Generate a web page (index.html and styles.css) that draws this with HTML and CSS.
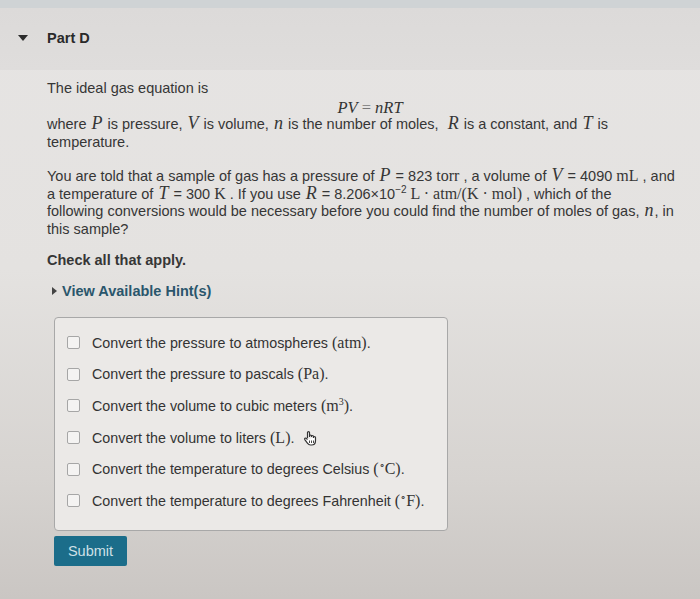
FILE: index.html
```html
<!DOCTYPE html>
<html>
<head>
<meta charset="utf-8">
<link rel="stylesheet" href="styles.css">
</head>
<body>
<div class="topstrip"></div>
<header class="part-head">
  <span class="caret"></span>
  <span class="part-title">Part D</span>
</header>
<main class="content">
  <p class="intro">The ideal gas equation is</p>
  <div class="equation"><i>PV</i> <span class="eq">=</span> <i>nRT</i></div>
  <p class="para">where <i class="m">P</i> is pressure, <i class="m">V</i> is volume, <i class="m">n</i> is the number of moles, &nbsp;<i class="m">R</i> is a constant, and <i class="m">T</i> is<br>temperature.</p>
  <p class="para second">You are told that a sample of gas has a pressure of <i class="m">P</i> = 823 <span class="u">torr</span> , a volume of <i class="m">V</i> = 4090 <span class="u">mL</span> , and<br>a temperature of <i class="m">T</i> = 300 <span class="u">K</span> . If you use <i class="m">R</i> = 8.206×10<sup>−2</sup> <span class="u">L · atm/(K · mol)</span> , which of the<br>following conversions would be necessary before you could find the number of moles of gas, <i class="m">n</i>, in<br>this sample?</p>
  <p class="check">Check all that apply.</p>
  <p class="hint"><span class="hint-caret"></span>View Available Hint(s)</p>
  <div class="options">
    <label class="opt"><span class="box"></span>Convert the pressure to atmospheres <span class="u">(atm)</span>.</label>
    <label class="opt"><span class="box"></span>Convert the pressure to pascals <span class="u">(Pa)</span>.</label>
    <label class="opt"><span class="box"></span>Convert the volume to cubic meters <span class="u">(m<sup>3</sup>)</span>.</label>
    <label class="opt"><span class="box"></span>Convert the volume to liters <span class="u">(L)</span>.
      <svg class="cursor" width="16" height="16" viewBox="0 0 16 16"><path d="M5.5 8V2.6a1 1 0 0 1 2 0V7m0-1a1 1 0 0 1 2 0v1m0-.5a1 1 0 0 1 2 0V8m0-.5a1 1 0 0 1 2 0v3.2c0 2.4-1.6 4.3-4 4.3H8.6c-1.4 0-2.4-.7-3.2-1.8L2.8 9.6a1 1 0 0 1 1.5-1.3L5.5 9.5" fill="#fff" stroke="#333" stroke-width="1.2" stroke-linejoin="round"/><path d="M7.5 10.5v2.5M9.5 10.5v2.5M11.5 10.5v2.5" stroke="#333" stroke-width="0.9"/></svg>
    </label>
    <label class="opt"><span class="box"></span>Convert the temperature to degrees Celsius <span class="u">(<sup>∘</sup>C)</span>.</label>
    <label class="opt"><span class="box"></span>Convert the temperature to degrees Fahrenheit <span class="u">(<sup>∘</sup>F)</span>.</label>
  </div>
  <button class="submit">Submit</button>
</main>
</body>
</html>
```

FILE: styles.css
```css
html, body {
  margin: 0;
  padding: 0;
}
body {
  width: 700px;
  height: 599px;
  overflow: hidden;
  font-family: "Liberation Sans", Arial, sans-serif;
  color: #363636;
  background: linear-gradient(180deg, #e6e4e3 0%, #e4e2e0 45%, #d6d3d0 80%, #cac6c3 100%);
}
.topstrip {
  height: 8px;
  background: #cfd3d5;
}
.part-head {
  height: 62px;
  display: flex;
  align-items: center;
  background: linear-gradient(180deg, #dcdad9 0%, #dfdddc 100%);
  padding-left: 18px;
  box-sizing: border-box;
  padding-bottom: 2px;
}
.caret {
  width: 0;
  height: 0;
  border-left: 5px solid transparent;
  border-right: 5px solid transparent;
  border-top: 6px solid #2c2c2c;
  margin-right: 19px;
}
.part-title {
  font-weight: bold;
  font-size: 14.5px;
  color: #2a2a2a;
}
.content {
  padding: 9px 7px 0 47px;
}
p {
  margin: 0;
}
.intro {
  font-size: 14.5px;
  line-height: 18px;
}
.equation {
  text-align: center;
  font-family: "Liberation Serif", "Times New Roman", serif;
  font-size: 16.5px;
  line-height: 16px;
  margin-top: 3px;
  color: #333;
}
.equation .eq {
  color: #777;
}
.para {
  font-size: 14.5px;
  line-height: 17.7px;
}
.second {
  margin-top: 16.5px;
}
.m {
  font-family: "Liberation Serif", "Times New Roman", serif;
  font-size: 18px;
  line-height: 12px;
  padding: 0 1px;
}
.u {
  font-family: "Liberation Serif", "Times New Roman", serif;
  font-size: 16px;
  line-height: 12px;
}
sup {
  font-size: 10px;
  line-height: 0;
}
.check {
  font-weight: bold;
  font-size: 14.5px;
  margin-top: 13px;
  line-height: 17px;
}
.hint {
  font-weight: bold;
  font-size: 14.5px;
  color: #2a566c;
  margin-top: 14px;
  line-height: 17px;
  display: flex;
  align-items: center;
  padding-left: 5px;
}
.hint-caret {
  width: 0;
  height: 0;
  border-top: 4px solid transparent;
  border-bottom: 4px solid transparent;
  border-left: 5px solid #444;
  margin-right: 5px;
}
.options {
  margin-top: 17px;
  margin-left: 7px;
  width: 394px;
  box-sizing: border-box;
  border: 1px solid #a8a8a8;
  border-radius: 4px;
  background: #ebe9e7;
  padding: 16px 0 20px 12px;
  display: flex;
  flex-direction: column;
  gap: 13.6px;
}
.opt {
  display: flex;
  align-items: center;
  font-size: 14.3px;
  line-height: 18px;
  color: #333;
}
.box {
  width: 11px;
  height: 11px;
  border: 1px solid #a6a6a6;
  border-radius: 2px;
  background: #f4f3f2;
  margin-right: 12px;
  flex: none;
}
.opt .u {
  margin-left: 4px;
}
.cursor {
  margin-left: 8px;
}
.submit {
  margin-top: 5px;
  margin-left: 7px;
  width: 73px;
  height: 30px;
  border: none;
  border-radius: 2px;
  background: #1b6d8a;
  color: #cfe0e7;
  font-family: "Liberation Sans", Arial, sans-serif;
  font-size: 14.5px;
  padding: 0;
}
```
